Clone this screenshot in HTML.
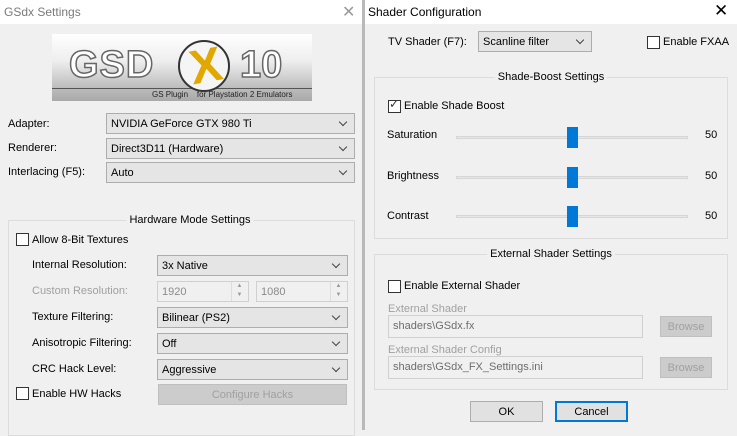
<!DOCTYPE html>
<html><head><style>
*{box-sizing:border-box;margin:0;padding:0}
body{width:737px;height:430px;overflow:hidden;background:#f0f0f0;font-family:"Liberation Sans",sans-serif;font-size:11px;color:#000;position:relative}
.a{position:absolute;white-space:nowrap}
.combo{position:absolute;background:#e5e5e5;border:1px solid #adadad;padding:4px 0 0 4px;height:21px}
.combo:after{content:"";position:absolute;right:8px;top:5px;width:5px;height:5px;border-right:1px solid #444;border-bottom:1px solid #444;transform:rotate(45deg)}
.cb{position:absolute;width:13px;height:13px;border:1px solid #333;background:#fff}
.grp{position:absolute;border:1px solid #dcdcdc}
.gt{position:absolute;background:#f0f0f0;padding:0 3px;transform:translateX(-50%);white-space:nowrap}
.btn{position:absolute;background:#e1e1e1;border:1px solid #adadad;text-align:center;padding-top:4px}
.dis{color:#a0a0a0}
.dbtn{position:absolute;background:#cccccc;border:1px solid #bfbfbf;color:#a0a0a0;text-align:center;padding-top:4px}
.tb{position:absolute;border:1px solid #d0d0d0;background:#f0f0f0;color:#6d6d6d;padding:4px 0 0 4px}
.track{position:absolute;height:3px;background:#e7e7e7;border:1px solid #d6d6d6}
.thumb{position:absolute;width:11px;height:21px;background:#0078d7}
</style></head><body>
<!-- left window -->
<div class="a" style="left:0;top:0;width:363px;height:24px;background:#fff"></div>
<div class="a" style="left:4px;top:5px;color:#7a7a7a;font-size:12px">GSdx Settings</div>
<div class="a" style="left:342px;top:2px;color:#999;font-size:16px">✕</div>
<div class="a" style="left:52px;top:34px;width:260px;height:67px;background:linear-gradient(#fff 0%,#eee 40%,#bdbdbd 80%,#a9a9a9 100%);overflow:hidden">
 <div class="a" style="left:0;top:54px;width:260px;height:1px;background:#555"></div>
 <div class="a" style="left:17px;top:10px;font:bold 38px 'Liberation Sans';color:#fff;-webkit-text-stroke:1.5px #666;letter-spacing:1px">GSD</div>
 <div class="a" style="left:126px;top:6px;width:52px;height:52px;border:2px solid #333;border-radius:50%;background:#f5f5f5"></div>
 <div class="a" style="left:138px;top:5px;font:bold 48px 'Liberation Sans';color:#e0a800;transform:rotate(-10deg)">X</div>
 <div class="a" style="left:188px;top:10px;font:bold 38px 'Liberation Sans';color:#fff;-webkit-text-stroke:1.5px #666">10</div>
 <div class="a" style="left:100px;top:56px;font-size:8px;color:#222">GS Plugin &nbsp;&nbsp;&nbsp;for Playstation 2 Emulators</div>
</div>
<div class="a" style="left:8px;top:118px">Adapter:</div>
<div class="combo" style="left:106px;top:113px;width:249px">NVIDIA GeForce GTX 980 Ti</div>
<div class="a" style="left:8px;top:142px">Renderer:</div>
<div class="combo" style="left:106px;top:138px;width:249px">Direct3D11 (Hardware)</div>
<div class="a" style="left:8px;top:166px">Interlacing (F5):</div>
<div class="combo" style="left:106px;top:162px;width:249px">Auto</div>

<div class="grp" style="left:8px;top:220px;width:347px;height:216px"></div>
<div class="gt" style="left:190px;top:214px">Hardware Mode Settings</div>
<div class="cb" style="left:16px;top:233px"></div><div class="a" style="left:32px;top:234px">Allow 8-Bit Textures</div>
<div class="a" style="left:32px;top:259px">Internal Resolution:</div>
<div class="combo" style="left:157px;top:255px;width:191px">3x Native</div>
<div class="a dis" style="left:32px;top:285px">Custom Resolution:</div>
<div class="tb" style="left:157px;top:281px;width:92px;height:21px;color:#8a8a8a">1920</div>
<div class="a" style="left:231px;top:282px;width:16px;height:19px;border-left:1px solid #ddd;color:#999;font-size:6px;line-height:9px;text-align:center">▲<br>▼</div>
<div class="tb" style="left:256px;top:281px;width:92px;height:21px;color:#8a8a8a">1080</div>
<div class="a" style="left:330px;top:282px;width:16px;height:19px;border-left:1px solid #ddd;color:#999;font-size:6px;line-height:9px;text-align:center">▲<br>▼</div>
<div class="a" style="left:32px;top:311px">Texture Filtering:</div>
<div class="combo" style="left:157px;top:307px;width:191px">Bilinear (PS2)</div>
<div class="a" style="left:32px;top:337px">Anisotropic Filtering:</div>
<div class="combo" style="left:157px;top:333px;width:191px">Off</div>
<div class="a" style="left:32px;top:363px">CRC Hack Level:</div>
<div class="combo" style="left:157px;top:359px;width:191px">Aggressive</div>
<div class="cb" style="left:16px;top:387px"></div><div class="a" style="left:32px;top:388px">Enable HW Hacks</div>
<div class="dbtn" style="left:158px;top:384px;width:189px;height:21px">Configure Hacks</div>

<!-- right window -->
<div class="a" style="left:362px;top:0;width:3px;height:430px;background:#b9b9b9"></div>
<div class="a" style="left:365px;top:0;width:372px;height:24px;background:#fff"></div>
<div class="a" style="left:368px;top:5px;font-size:12px">Shader Configuration</div>
<div class="a" style="left:714px;top:1px;font-size:17px">✕</div>
<div class="a" style="left:388px;top:36px">TV Shader (F7):</div>
<div class="combo" style="left:478px;top:31px;width:114px;height:21px">Scanline filter</div>
<div class="cb" style="left:647px;top:36px"></div><div class="a" style="left:663px;top:36px">Enable FXAA</div>

<div class="grp" style="left:374px;top:77px;width:354px;height:162px"></div>
<div class="gt" style="left:551px;top:71px">Shade-Boost Settings</div>
<div class="cb" style="left:388px;top:100px"></div>
<div class="a" style="left:389px;top:97px;font-size:12px;color:#333">✓</div>
<div class="a" style="left:404px;top:100px">Enable Shade Boost</div>
<div class="a" style="left:387px;top:129px">Saturation</div>
<div class="track" style="left:456px;top:136px;width:232px"></div>
<div class="thumb" style="left:567px;top:127px"></div>
<div class="a" style="left:705px;top:129px">50</div>
<div class="a" style="left:387px;top:170px">Brightness</div>
<div class="track" style="left:456px;top:176px;width:232px"></div>
<div class="thumb" style="left:567px;top:167px"></div>
<div class="a" style="left:705px;top:170px">50</div>
<div class="a" style="left:387px;top:210px">Contrast</div>
<div class="track" style="left:456px;top:215px;width:232px"></div>
<div class="thumb" style="left:567px;top:206px"></div>
<div class="a" style="left:705px;top:210px">50</div>

<div class="grp" style="left:374px;top:254px;width:354px;height:136px"></div>
<div class="gt" style="left:551px;top:248px">External Shader Settings</div>
<div class="cb" style="left:388px;top:280px"></div><div class="a" style="left:404px;top:280px">Enable External Shader</div>
<div class="a dis" style="left:388px;top:303px">External Shader</div>
<div class="tb" style="left:388px;top:315px;width:255px;height:23px">shaders\GSdx.fx</div>
<div class="dbtn" style="left:660px;top:316px;width:52px;height:21px">Browse</div>
<div class="a dis" style="left:388px;top:344px">External Shader Config</div>
<div class="tb" style="left:388px;top:356px;width:255px;height:23px">shaders\GSdx_FX_Settings.ini</div>
<div class="dbtn" style="left:660px;top:357px;width:52px;height:21px">Browse</div>
<div class="btn" style="left:470px;top:401px;width:73px;height:21px">OK</div>
<div class="btn" style="left:555px;top:401px;width:73px;height:21px;border:2px solid #0078d7;padding-top:3px">Cancel</div>
</body></html>
